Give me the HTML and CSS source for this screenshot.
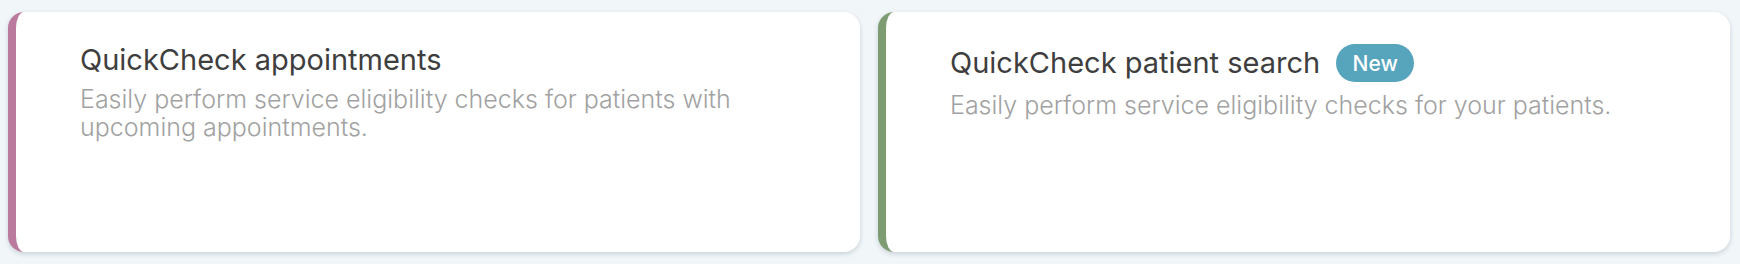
FILE: index.html
```html
<!DOCTYPE html>
<html lang="en">
<head>
<meta charset="utf-8">
<title>QuickCheck</title>
<link rel="stylesheet" href="styles.css">
</head>
<body>
<div class="cards">
  <div class="card card-pink">
    <div class="card-head">
      <h2 class="card-title">QuickCheck appointments</h2>
    </div>
    <p class="card-desc">Easily perform service eligibility checks for patients with upcoming appointments.</p>
  </div>
  <div class="card card-green">
    <div class="card-head">
      <h2 class="card-title">QuickCheck patient search</h2>
      <span class="badge">New</span>
    </div>
    <p class="card-desc">Easily perform service eligibility checks for your patients.</p>
  </div>
</div>
</body>
</html>
```

FILE: styles.css
```css
html, body {
  margin: 0;
  padding: 0;
  background: #f1f6f9;
}
body {
  padding: 8px;
  font-family: Inter, "Noto Sans", "DejaVu Sans", sans-serif;
}
.cards {
  display: grid;
  grid-template-columns: 852px 852px;
  column-gap: 18px;
  padding-top: 4px;
}
.card {
  box-sizing: border-box;
  height: 240px;
  background: #ffffff;
  border-radius: 16px;
  border-left: 8px solid #b97a9d;
  box-shadow: 0 2px 5px rgba(60, 80, 100, 0.22);
  padding: 32px 40px 0 64px;
}
.card-green {
  border-left-color: #7e9c72;
}
.card-head {
  display: flex;
  align-items: center;
  gap: 16px;
}
.card-title {
  margin: 0;
  font-size: 29px;
  line-height: 32px;
  font-weight: 400;
  color: #3e3e3e;
}
.badge {
  display: inline-flex;
  align-items: center;
  justify-content: center;
  height: 38px;
  width: 78px;
  border-radius: 19px;
  background: #57a4bd;
  color: #ffffff;
  font-size: 21px;
  font-weight: 500;
}
.card-desc {
  margin: 9px 0 0;
  font-size: 25px;
  line-height: 28px;
  font-weight: 300;
  color: #a2a2a2;
  max-width: 700px;
}
```
